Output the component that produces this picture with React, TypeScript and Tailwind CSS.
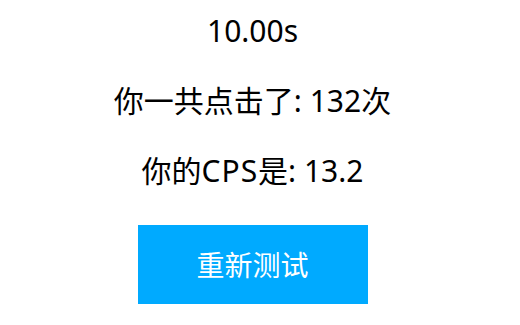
export default function App() {
  const font = { fontFamily: '"Noto Sans", "Noto Sans CJK SC", sans-serif' }
  return (
    <div className="w-[520px] h-[325px] bg-white overflow-hidden">
      <div className="w-[505px] flex flex-col items-center pt-[11px] text-black" style={font}>
        <p className="h-10 leading-10 text-[30px]">10.00s</p>
        <p className="mt-[30px] h-10 leading-10 text-[30px]">你一共点击了: 132次</p>
        <p className="mt-[30px] h-10 leading-10 text-[30px]">
          你的<span className="tracking-[1px]">CPS</span>是: 13.2
        </p>
        <button className="mt-[34px] w-[230px] h-[79px] bg-[#00aaff] text-white text-[28px] flex items-center justify-center">
          重新测试
        </button>
      </div>
    </div>
  )
}
